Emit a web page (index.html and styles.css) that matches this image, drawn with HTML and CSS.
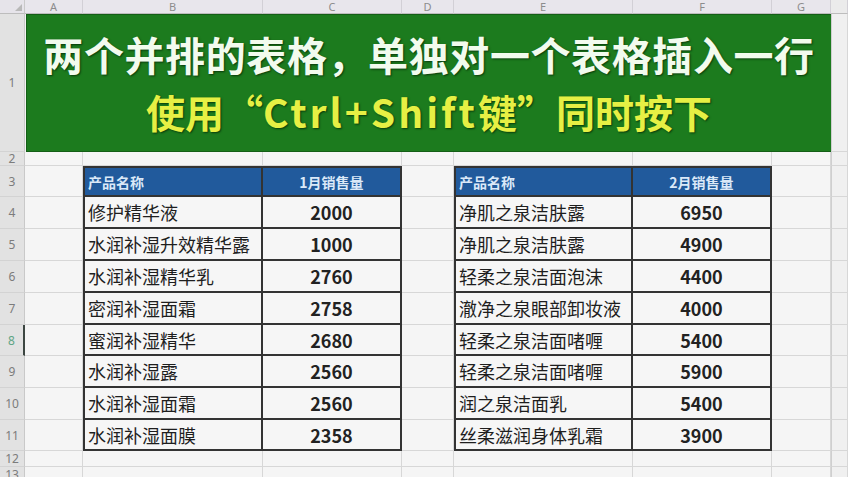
FILE: index.html
```html
<!DOCTYPE html>
<html lang="zh-CN">
<head>
<meta charset="utf-8">
<title>两个并排的表格</title>
<link rel="stylesheet" href="styles.css">
</head>
<body>
<div class="sheet">
  <div class="corner"><span class="tri"></span></div>
  <div class="colh">A</div>
  <div class="colh">B</div>
  <div class="colh">C</div>
  <div class="colh">D</div>
  <div class="colh">E</div>
  <div class="colh">F</div>
  <div class="colh">G</div>
  <div class="colh edge"></div>

  <div class="rowh">1</div>
  <div class="banner">
    <div class="l1">两个并排的表格，单独对一个表格插入一行</div>
    <div class="l2">使用“<span class="lat">Ctrl+Shift</span>键”同时按下</div>
  </div>
  <div class="c edge"></div>

  <div class="rowh">2</div>
  <div class="c"></div><div class="c"></div><div class="c"></div><div class="c"></div><div class="c"></div><div class="c"></div><div class="c"></div><div class="c edge"></div>

  <div class="rowh">3</div>
  <div class="c"></div>
  <div class="th first name">产品名称</div>
  <div class="th num">1月销售量</div>
  <div class="c"></div>
  <div class="th first name">产品名称</div>
  <div class="th num">2月销售量</div>
  <div class="c"></div><div class="c edge"></div>

  <div class="rowh">4</div>
  <div class="c"></div>
  <div class="td first name">修护精华液</div><div class="td num">2000</div>
  <div class="c"></div>
  <div class="td first name">净肌之泉洁肤露</div><div class="td num">6950</div>
  <div class="c"></div><div class="c edge"></div>

  <div class="rowh">5</div>
  <div class="c"></div>
  <div class="td first name">水润补湿升效精华露</div><div class="td num">1000</div>
  <div class="c"></div>
  <div class="td first name">净肌之泉洁肤露</div><div class="td num">4900</div>
  <div class="c"></div><div class="c edge"></div>

  <div class="rowh">6</div>
  <div class="c"></div>
  <div class="td first name">水润补湿精华乳</div><div class="td num">2760</div>
  <div class="c"></div>
  <div class="td first name">轻柔之泉洁面泡沫</div><div class="td num">4400</div>
  <div class="c"></div><div class="c edge"></div>

  <div class="rowh">7</div>
  <div class="c"></div>
  <div class="td first name">密润补湿面霜</div><div class="td num">2758</div>
  <div class="c"></div>
  <div class="td first name">澈净之泉眼部卸妆液</div><div class="td num">4000</div>
  <div class="c"></div><div class="c edge"></div>

  <div class="rowh sel">8</div>
  <div class="c"></div>
  <div class="td first name">蜜润补湿精华</div><div class="td num">2680</div>
  <div class="c"></div>
  <div class="td first name">轻柔之泉洁面啫喱</div><div class="td num">5400</div>
  <div class="c"></div><div class="c edge"></div>

  <div class="rowh">9</div>
  <div class="c"></div>
  <div class="td first name">水润补湿露</div><div class="td num">2560</div>
  <div class="c"></div>
  <div class="td first name">轻柔之泉洁面啫喱</div><div class="td num">5900</div>
  <div class="c"></div><div class="c edge"></div>

  <div class="rowh">10</div>
  <div class="c"></div>
  <div class="td first name">水润补湿面霜</div><div class="td num">2560</div>
  <div class="c"></div>
  <div class="td first name">润之泉洁面乳</div><div class="td num">5400</div>
  <div class="c"></div><div class="c edge"></div>

  <div class="rowh">11</div>
  <div class="c"></div>
  <div class="td first name">水润补湿面膜</div><div class="td num">2358</div>
  <div class="c"></div>
  <div class="td first name">丝柔滋润身体乳霜</div><div class="td num">3900</div>
  <div class="c"></div><div class="c edge"></div>

  <div class="rowh">12</div>
  <div class="c"></div><div class="c"></div><div class="c"></div><div class="c"></div><div class="c"></div><div class="c"></div><div class="c"></div><div class="c edge"></div>

  <div class="rowh">13</div>
  <div class="c"></div><div class="c"></div><div class="c"></div><div class="c"></div><div class="c"></div><div class="c"></div><div class="c"></div><div class="c edge"></div>
</div>
</body>
</html>
```

FILE: styles.css
```css
html, body {
  margin: 0;
  padding: 0;
  background: #f3f3f3;
  overflow: hidden;
}

.sheet {
  display: grid;
  grid-template-columns: 25px 58px 180px 139px 52px 179px 139px 59px 17px;
  grid-template-rows: 14px 138px 14px 31px 32px 32px 32px 32px 31px 32px 32px 31px 16px 16px;
  width: 848px;
  height: 477px;
  overflow: hidden;
  font-family: "Noto Sans CJK SC", "Noto Sans", sans-serif;
}

.sheet > div {
  box-sizing: border-box;
}

.corner {
  background: #e6e4ea;
  border-right: 1px solid #c9c9c9;
  border-bottom: 1px solid #bdbdbd;
  position: relative;
}
.corner .tri {
  position: absolute;
  right: 2px;
  bottom: 2px;
  width: 0;
  height: 0;
  border-left: 7px solid transparent;
  border-bottom: 7px solid #b9b9b9;
}

.colh {
  background: #e8e6ec;
  border-right: 1px solid #d2d0d6;
  border-bottom: 1px solid #bdbdbd;
  color: #8c8c8c;
  font-family: "Noto Sans", sans-serif;
  font-size: 11px;
  line-height: 13px;
  text-align: center;
}
.colh.edge {
  background: #ebebeb;
}

.rowh {
  background: #e2e2e2;
  border-right: 1px solid #c9c9c9;
  border-bottom: 1px solid #d3d3d3;
  color: #7c7c7c;
  font-family: "Noto Sans", sans-serif;
  font-size: 12px;
  display: flex;
  align-items: center;
  justify-content: center;
}
.rowh.sel {
  color: #5fa585;
  border-right: 2px solid #3c4641;
}

.c {
  background: #f5f5f5;
  border-right: 1px solid #d7d7d7;
  border-bottom: 1px solid #d7d7d7;
}
.c.edge {
  background: #f0f0f0;
  border-left: 1px solid #cfcfcf;
}

.banner {
  grid-column: 2 / 9;
  margin: 0 -1px 0 1px;
  background: #1c7b1e;
  border: 1px solid #145e16;
  display: flex;
  flex-direction: column;
  align-items: center;
  justify-content: center;
  gap: 6px;
  font-weight: 700;
}
.banner .l1 {
  color: #f2fbee;
  font-size: 40px;
  line-height: 51px;
  letter-spacing: 0.6px;
  text-shadow: 1px 1px 2px rgba(0, 30, 0, 0.7);
}
.banner .l2 {
  color: #e6f044;
  font-size: 39px;
  line-height: 51px;
  text-shadow: 1px 1px 2px rgba(0, 30, 0, 0.7);
}
.banner .lat {
  letter-spacing: 3px;
}

.th, .td {
  border-right: 2px solid #333;
  border-bottom: 2px solid #333;
  display: flex;
  align-items: center;
}
.th.first, .td.first {
  border-left: 2px solid #333;
}
.th {
  border-top: 2px solid #333;
  background: #215a9c;
  color: #dbe9f8;
  font-size: 14px;
  font-weight: 700;
}
.td {
  background: #f6f6f6;
  color: #1e1e1e;
  font-size: 18px;
}
.name {
  padding-left: 3px;
  justify-content: flex-start;
}
.num {
  justify-content: center;
}
.td.num {
  font-weight: 700;
  color: #222;
}
```
